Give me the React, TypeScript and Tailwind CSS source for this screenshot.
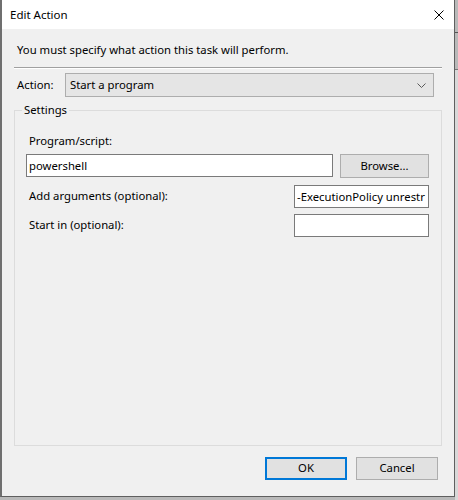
import React from 'react';

const font = "font-['Segoe_UI','Noto_Sans',sans-serif]";

const TextBox = ({ value, className }: { value?: string; className: string }) => (
  <div
    className={`h-[23px] bg-white border border-[#7a7a7a] px-[2px] text-[11.3px] leading-[21px] overflow-hidden whitespace-nowrap ${className}`}
  >
    {value}
  </div>
);

const Button = ({ label, primary }: { label: string; primary?: boolean }) => (
  <div
    className={`w-[82px] h-[23px] flex items-center justify-center bg-[#e1e1e1] text-[11.3px] ${
      primary ? 'border-2 border-[#0078d7]' : 'border border-[#adadad]'
    }`}
  >
    {label}
  </div>
);

const EditAction = () => {
  return (
    <div className={`w-[455px] h-[497px] flex flex-col bg-[#f0f0f0] border-l-2 border-r border-b border-l-[#6f6f6f] border-r-[#5f5f5f] border-b-[#5f5f5f] text-black text-[11.3px] ${font}`}>
      {/* title bar */}
      <div className="h-[29px] shrink-0 bg-white flex items-center justify-between pl-[8px] pr-[10px]">
        <span className="text-[11.5px]">Edit Action</span>
        <svg width="10" height="10" viewBox="0 0 10 10">
          <path d="M0.5 0.5 L9.5 9.5 M9.5 0.5 L0.5 9.5" stroke="#000" strokeWidth="1" />
        </svg>
      </div>

      <div className="flex flex-col px-[12px] pt-[13px]">
        <p className="pl-[3px] leading-[16px]">You must specify what action this task will perform.</p>
        <div className="mt-[9px] border-t border-t-[#a0a0a0] border-b border-b-white" />

        <div className="mt-[4px] flex items-center pr-[8px]">
          <span className="w-[51px] pl-[3px]">Action:</span>
          <div className="flex-1 h-[24px] flex items-center justify-between bg-[#e5e5e5] border border-[#adadad] pl-[4px] pr-[7px]">
            <span>Start a program</span>
            <svg width="9" height="5" viewBox="0 0 9 5">
              <path d="M0.5 0.5 L4.5 4.5 L8.5 0.5" stroke="#5a5a5a" strokeWidth="1" fill="none" />
            </svg>
          </div>
        </div>

        {/* Settings group */}
        <div className="relative mt-[13px] h-[336px] border border-[#dcdcdc] pl-[11px] pr-[12px] pt-[22px]">
          <span className="absolute -top-[9px] left-[7px] px-[2px] bg-[#f0f0f0] leading-[16px]">Settings</span>
          <p className="pl-[3px] leading-[16px]">Program/script:</p>
          <div className="mt-[5px] flex gap-[7px]">
            <TextBox value="powershell" className="w-[307px]" />
            <div className="w-[89px] h-[24px] flex items-center justify-center bg-[#e1e1e1] border border-[#adadad]">
              Browse...
            </div>
          </div>
          <div className="mt-[7px] flex items-center justify-between">
            <span className="pl-[3px]">Add arguments (optional):</span>
            <TextBox value="-ExecutionPolicy unrestr" className="w-[135px]" />
          </div>
          <div className="mt-[6px] flex items-center justify-between">
            <span className="pl-[3px]">Start in (optional):</span>
            <TextBox className="w-[135px]" />
          </div>
        </div>

        <div className="mt-[11px] flex justify-end gap-[9px] pr-[4px]">
          <Button label="OK" primary />
          <Button label="Cancel" />
        </div>
      </div>
    </div>
  );
};

export default function App() {
  return (
    <div className="w-[458px] h-[500px] bg-[#b9b9b9] flex">
      <EditAction />
      <div className="flex-1 flex flex-col">
        <div className="h-[33px] border-b border-[#555]" />
        <div className="h-[37px] border-b border-[#777]" />
        <div className="flex-1 bg-[#d8d8d8]" />
      </div>
    </div>
  );
}
